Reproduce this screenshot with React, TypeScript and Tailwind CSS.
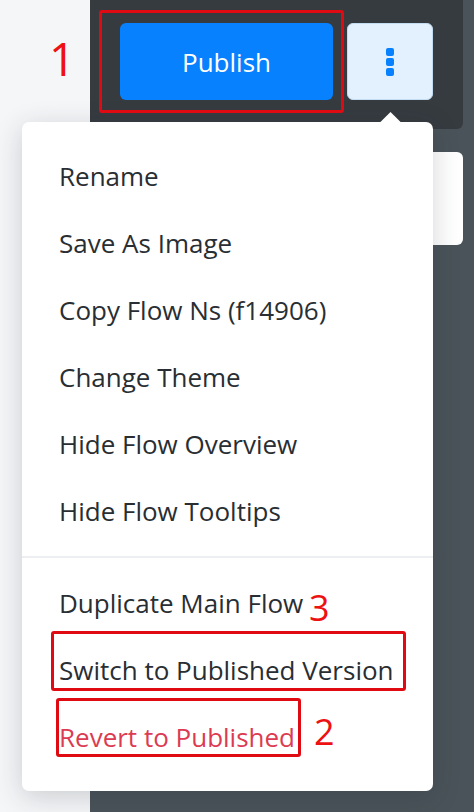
const topItems = ["Rename", "Save As Image", "Copy Flow Ns (f14906)", "Change Theme", "Hide Flow Overview", "Hide Flow Tooltips"];

function MenuRow({ label, danger }: { label: string; danger?: boolean }) {
  return (
    <div className={`h-[67px] flex items-center pl-[37px] text-[26px] whitespace-nowrap ${danger ? "text-[#dc3b52]" : "text-[#292e33]"}`}>
      {label}
    </div>
  );
}

function Menu() {
  return (
    <div className="absolute left-[22px] top-[122px] w-[411px] h-[669px] bg-white rounded-[7px] shadow-[0_6px_28px_rgba(30,40,50,0.2)]">
      {/* Arrow */}
      <div className="absolute right-[35px] top-[-7px] w-[15px] h-[15px] bg-white rotate-45" />
      <div className="pt-[21px]">
        {topItems.map(item => <MenuRow key={item} label={item} />)}
      </div>
      <div className="mt-[11px] border-t-2 border-[#eceef2]" />
      <div className="pt-[12px]">
        <MenuRow label="Duplicate Main Flow" />
        <MenuRow label="Switch to Published Version" />
        <MenuRow label="Revert to Published" danger />
      </div>
    </div>
  );
}

function Annotations() {
  return (
    <>
      <div className="absolute left-[99px] top-[10px] w-[245px] h-[103px] border-[3px] border-[#e00b12] rounded-[3px]" />
      <div className="absolute left-[51px] top-[631px] w-[355px] h-[60px] border-[3px] border-[#e00b12] rounded-[3px]" />
      <div className="absolute left-[56px] top-[698px] w-[245px] h-[59px] border-[3px] border-[#e00b12] rounded-[3px]" />
      <div className="absolute left-[49px] top-[32px] text-[46px] leading-[52px] text-[#ee1111]">1</div>
      <div className="absolute left-[314px] top-[708px] text-[36px] leading-[48px] text-[#ee1111]">2</div>
      <div className="absolute left-[309px] top-[584px] text-[36px] leading-[48px] text-[#ee1111]">3</div>
    </>
  );
}

export default function App() {
  return (
    <div className="relative w-[474px] h-[812px] overflow-hidden flex bg-[#f5f6f8] font-['Open_Sans',sans-serif]">
      <div className="w-[90px] shrink-0" />
      <div className="flex-1 bg-[#4a5359]">
        {/* Header bar */}
        <div className="w-[373px] h-[129px] bg-[#363b40] rounded-br-[6px] flex items-start gap-[14px] pl-[30px] pt-[23px]">
          <button className="w-[213px] h-[77px] pt-[1px] bg-[#0781fe] rounded-[6px] text-white text-[26px]">Publish</button>
          <button className="w-[86px] h-[77px] bg-[#e3f0fd] rounded-[6px] border border-[#c3dcf2] flex flex-col items-center justify-center gap-[2px]">
            <span className="w-[8px] h-[8px] rounded-[2px] bg-[#0781fe]" />
            <span className="w-[8px] h-[8px] rounded-[2px] bg-[#0781fe]" />
            <span className="w-[8px] h-[8px] rounded-[2px] bg-[#0781fe]" />
          </button>
        </div>
        {/* Panel behind the menu */}
        <div className="mt-[23px] w-[373px] h-[93px] bg-white rounded-r-[6px]" />
      </div>
      <Menu />
      <Annotations />
    </div>
  );
}
